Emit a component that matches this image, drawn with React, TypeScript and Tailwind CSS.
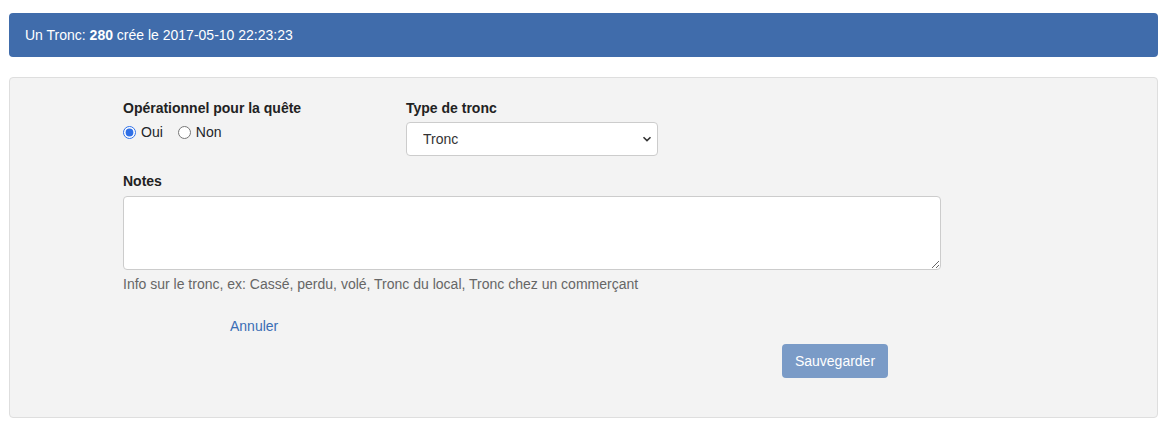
import React, { useState } from "react";

export default function App() {
  const [operational, setOperational] = useState("oui");
  const [type, setType] = useState("Tronc");
  const [notes, setNotes] = useState("");

  return (
    <div className="min-h-[428px] bg-white px-[9px] pt-[13px] font-['Liberation_Sans',Arial,sans-serif] text-[14px] text-[#212529]">
      <div className="flex h-[44px] items-center rounded-[4px] bg-[#406cab] px-4 text-[14px] text-white">
        <span>
          Un Tronc: <b>280</b> crée le 2017-05-10 22:23:23
        </span>
      </div>

      <div className="mt-[20px] h-[341px] rounded-[4px] border border-[#dedede] bg-[#f3f3f3] pl-[113px] pt-[20px]">
        <div className="flex">
          <div className="w-[283px]">
            <div className="mb-[3px] font-bold text-[#222]">Opérationnel pour la quête</div>
            <div className="flex items-center gap-[15px]">
              <label className="flex items-center gap-[5px]">
                <input
                  type="radio"
                  name="op"
                  className="m-0 h-[13px] w-[13px] accent-[#2f6fe6]"
                  checked={operational === "oui"}
                  onChange={() => setOperational("oui")}
                />
                Oui
              </label>
              <label className="flex items-center gap-[5px]">
                <input
                  type="radio"
                  name="op"
                  className="m-0 h-[13px] w-[13px]"
                  checked={operational === "non"}
                  onChange={() => setOperational("non")}
                />
                Non
              </label>
            </div>
          </div>
          <div>
            <div className="mb-[3px] font-bold text-[#222]">Type de tronc</div>
            <div className="relative w-[252px]">
              <select
                value={type}
                onChange={(e) => setType(e.target.value)}
                className="h-[34px] w-full appearance-none rounded-[4px] border border-[#ccc] bg-white pl-[16px] text-[14px] text-[#333] outline-none"
              >
                <option>Tronc</option>
                <option>Boîte</option>
              </select>
              <svg
                className="pointer-events-none absolute right-[6px] top-[12px]"
                width="10"
                height="10"
                viewBox="0 0 10 10"
              >
                <path d="M1.5 3.2 L5 6.6 L8.5 3.2" fill="none" stroke="#333" strokeWidth="1.6" />
              </svg>
            </div>
          </div>
        </div>

        <div className="mt-[15px] mb-[4px] font-bold text-[#222]">Notes</div>
        <textarea
          value={notes}
          onChange={(e) => setNotes(e.target.value)}
          className="block h-[74px] w-[818px] rounded-[4px] border border-[#ccc] bg-white p-2 outline-none"
        />
        <div className="mt-[4px] text-[#666]">
          Info sur le tronc, ex: Cassé, perdu, volé, Tronc du local, Tronc chez un commerçant
        </div>

        <div className="mt-[21px] pl-[107px]">
          <a href="#" className="text-[#3a6db5]">
            Annuler
          </a>
        </div>
        <div className="mt-[7px] flex w-[765px] justify-end">
          <button className="h-[34px] w-[106px] rounded-[4px] bg-[#7a9bc7] text-white">
            Sauvegarder
          </button>
        </div>
      </div>
    </div>
  );
}
